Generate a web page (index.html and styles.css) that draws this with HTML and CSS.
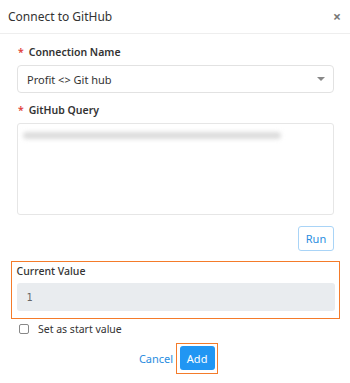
FILE: index.html
```html
<!DOCTYPE html>
<html lang="en">
<head>
  <meta charset="utf-8">
  <title>Connect to GitHub</title>
  <link rel="stylesheet" href="styles.css">
</head>
<body>
<div class="modal">
  <div class="modal-header">
    <span class="modal-title">Connect to GitHub</span>
    <span class="close">&times;</span>
  </div>

  <div class="modal-body">
    <div class="field">
      <label class="label"><span class="req">*</span>Connection Name</label>
      <div class="select">
        <span>Profit &lt;&gt; Git hub</span>
        <span class="caret"></span>
      </div>
    </div>

    <div class="field">
      <label class="label"><span class="req">*</span>GitHub Query</label>
      <div class="textarea">
        <div class="redacted"></div>
      </div>
    </div>

    <div class="run-row">
      <div class="btn btn-outline">Run</div>
    </div>

    <div class="highlight">
      <label class="label plain">Current Value</label>
      <div class="input-disabled">1</div>
    </div>

    <div class="check-row">
      <span class="checkbox"></span>
      <span>Set as start value</span>
    </div>

    <div class="footer">
      <span class="link">Cancel</span>
      <div class="highlight-btn">
        <div class="btn btn-primary">Add</div>
      </div>
    </div>
  </div>
</div>
</body>
</html>
```

FILE: styles.css
```css
* { box-sizing: border-box }
body { background: white; font-family: "Noto Sans", sans-serif; font-size: 11px; color: #333; margin: 0; padding: 0 }

.modal { width: 350px; }

.modal-header { display: flex; align-items: center; justify-content: space-between; height: 34px; padding: 0 8px; border-bottom: 1px solid #eee }
.modal-title { font-size: 12px; color: #333 }
.close { font-size: 14px; color: #777; font-weight: bold; margin-right: 1px }

.modal-body { padding: 11px 16px 0 17px }

.field { display: flex; flex-direction: column }
.field + .field { margin-top: 10px }

.label { font-weight: 600; font-size: 10.5px; color: #333; height: 14px; line-height: 14px; margin-bottom: 6px; padding-left: 1px }
.label.plain { font-weight: 500; padding-left: 0; margin-bottom: 0; display: block; height: 21px; line-height: 14px; padding-top: 2px }
.req { color: #e0403a; margin-right: 5px }

.select { display: flex; align-items: center; justify-content: space-between; height: 28px; border: 1px solid #e2e2e2; border-radius: 4px; padding: 0 8px 0 9px; font-size: 11px }
.caret { width: 0; height: 0; border-left: 4px solid transparent; border-right: 4px solid transparent; border-top: 4px solid #888 }

.textarea { height: 92px; border: 1px solid #e6e6e6; border-radius: 3px; padding: 8px 5px }
.redacted { width: 258px; height: 7px; background: #dcdcdc; border-radius: 4px; filter: blur(2px) }

.run-row { display: flex; justify-content: flex-end; margin-top: 11px }

.btn { display: inline-flex; align-items: center; justify-content: center; border-radius: 3px; font-size: 11px }
.btn-outline { width: 36px; height: 25px; border: 1px solid #a9d4f7; color: #2a8de0 }
.btn-primary { width: 35px; height: 24px; background: #2196f3; color: white }

.highlight { margin: 10px -6px 0 -6px; border: 1.5px solid #f47b2a; padding: 0 4.5px 6.5px 4.5px }
.input-disabled { height: 28px; background: #e9ecef; border-radius: 3px; display: flex; align-items: center; padding-left: 10px; font-family: "DejaVu Sans Mono", monospace; font-size: 10px; color: #666 }

.check-row { display: flex; align-items: center; margin-top: 5px; height: 10px; font-size: 10.5px }
.checkbox { width: 10px; height: 10px; border: 1px solid #888; border-radius: 2px; margin: 0 9px 0 2px }

.footer { display: flex; justify-content: center; align-items: center; margin-top: 9px; padding-left: 6px }
.link { color: #2a8de0; font-size: 11px; margin-right: 3px }
.highlight-btn { border: 1.5px solid #f47b2a; padding: 2.5px }
```
